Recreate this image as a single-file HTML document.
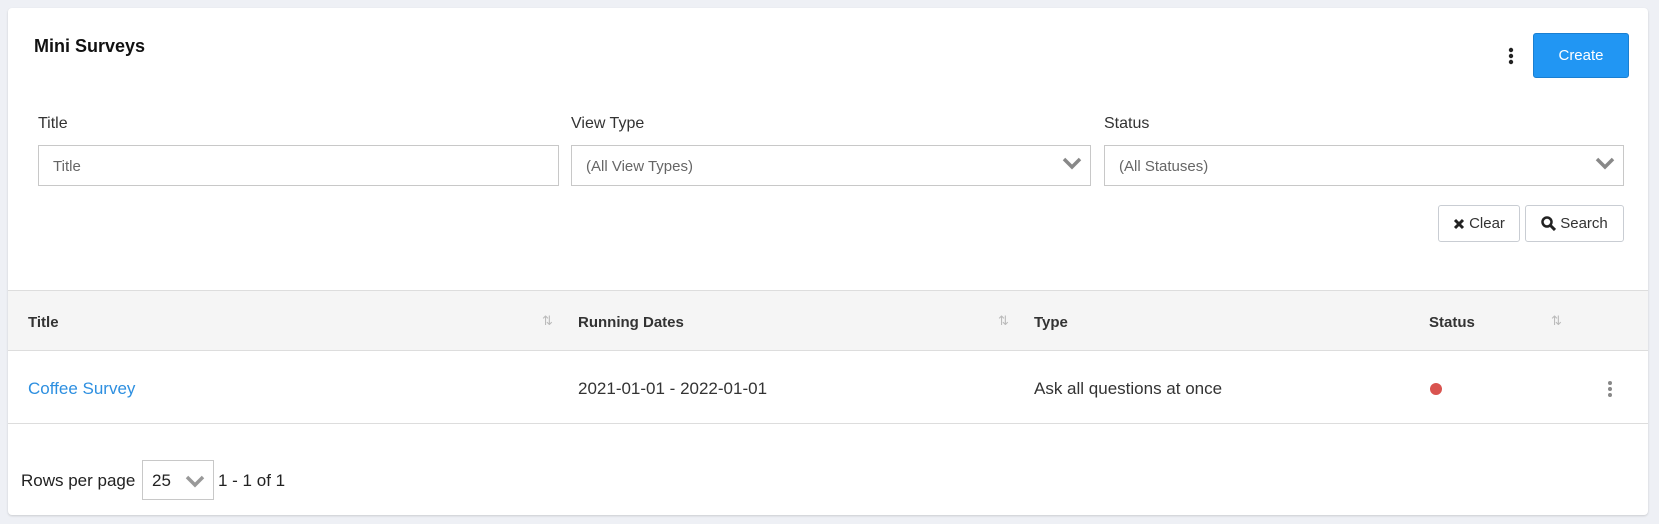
<!DOCTYPE html>
<html><head><style>
*{box-sizing:border-box;margin:0;padding:0}
body{width:1659px;height:524px;background:#eef0f5;font-family:"Liberation Sans",sans-serif;color:#333;position:relative;overflow:hidden}
.card{position:absolute;left:8px;top:8px;width:1640px;height:507px;background:#fff;border-radius:4px;box-shadow:0 1px 2px rgba(0,0,0,.15)}
.a{position:absolute}
h1{position:absolute;left:26px;top:28px;font-size:18px;font-weight:bold;color:#111}
.lbl{position:absolute;top:106px;font-size:16px;color:#333}
.inp{position:absolute;top:137px;height:41px;border:1px solid #c8c8c8;font-size:15px;color:#666;padding:12px 14px}
.chev{position:absolute;right:8px;top:10px}
.btn{position:absolute;top:197px;height:37px;border:1px solid #c9cdd3;border-radius:3px;font-size:15px;color:#333;display:flex;align-items:center;justify-content:center;gap:4px}
.thead{position:absolute;left:0;top:282px;width:1640px;height:61px;background:#f5f5f5;border-top:1px solid #ddd;border-bottom:1px solid #ddd}
.th{position:absolute;top:23px;font-size:15px;font-weight:bold;color:#333}
.row{position:absolute;left:0;top:343px;width:1640px;height:73px;border-bottom:1px solid #ddd}
.td{position:absolute;top:28px;font-size:17px;color:#333}
.sort{position:absolute;top:22px;color:#bbb;font-size:13px}
</style></head><body>
<div class="card">
<h1>Mini Surveys</h1>
<svg class="a" style="left:1500px;top:39px" width="6" height="18"><circle cx="3" cy="3" r="2.2" fill="#222"/><circle cx="3" cy="9" r="2.2" fill="#222"/><circle cx="3" cy="15" r="2.2" fill="#222"/></svg>
<div class="a" style="left:1525px;top:25px;width:96px;height:45px;background:#2196f3;border:1px solid #1a7fd1;border-radius:3px;color:#fff;font-size:15px;display:flex;align-items:center;justify-content:center">Create</div>
<div class="lbl" style="left:30px;top:107px">Title</div>
<div class="lbl" style="left:563px;top:107px">View Type</div>
<div class="lbl" style="left:1096px;top:107px">Status</div>
<div class="inp" style="left:30px;width:521px">Title</div>
<div class="inp" style="left:563px;width:520px">(All View Types)<svg class="chev" width="20" height="14"><path d="M2 3 L10 11 L18 3" stroke="#888" stroke-width="3.5" fill="none"/></svg></div>
<div class="inp" style="left:1096px;width:520px">(All Statuses)<svg class="chev" width="20" height="14"><path d="M2 3 L10 11 L18 3" stroke="#888" stroke-width="3.5" fill="none"/></svg></div>
<div class="btn" style="left:1430px;width:82px"><svg width="12" height="12"><path d="M2 2L10 10M10 2L2 10" stroke="#222" stroke-width="3"/></svg>Clear</div>
<div class="btn" style="left:1517px;width:99px"><svg width="15" height="15"><circle cx="6" cy="6" r="4.5" stroke="#222" stroke-width="2.5" fill="none"/><path d="M9.5 9.5L14 14" stroke="#222" stroke-width="3"/></svg>Search</div>
<div class="thead">
<div class="th" style="left:20px">Title</div><div class="sort" style="left:534px">⇅</div>
<div class="th" style="left:570px">Running Dates</div><div class="sort" style="left:990px">⇅</div>
<div class="th" style="left:1026px">Type</div>
<div class="th" style="left:1421px">Status</div><div class="sort" style="left:1543px">⇅</div>
</div>
<div class="row">
<div class="td" style="left:20px;color:#2d8fe0">Coffee Survey</div>
<div class="td" style="left:570px">2021-01-01 - 2022-01-01</div>
<div class="td" style="left:1026px">Ask all questions at once</div>
<div class="a" style="left:1422px;top:32px;width:12px;height:12px;border-radius:50%;background:#d9534f"></div>
<svg class="a" style="left:1599px;top:29px" width="6" height="18"><circle cx="3" cy="3" r="2" fill="#888"/><circle cx="3" cy="9" r="2" fill="#888"/><circle cx="3" cy="15" r="2" fill="#888"/></svg>
</div>
<div class="a" style="left:13px;top:463px;font-size:17px;color:#222">Rows per page</div>
<div class="a" style="left:134px;top:452px;width:72px;height:40px;border:1px solid #c8c8c8;font-size:17px;padding:10px 9px;color:#222">25<svg class="a" style="right:8px;top:13px" width="20" height="14"><path d="M2 3 L10 11 L18 3" stroke="#999" stroke-width="3.5" fill="none"/></svg></div>
<div class="a" style="left:210px;top:463px;font-size:17px;color:#222">1 - 1 of 1</div>
</div>
</body></html>
